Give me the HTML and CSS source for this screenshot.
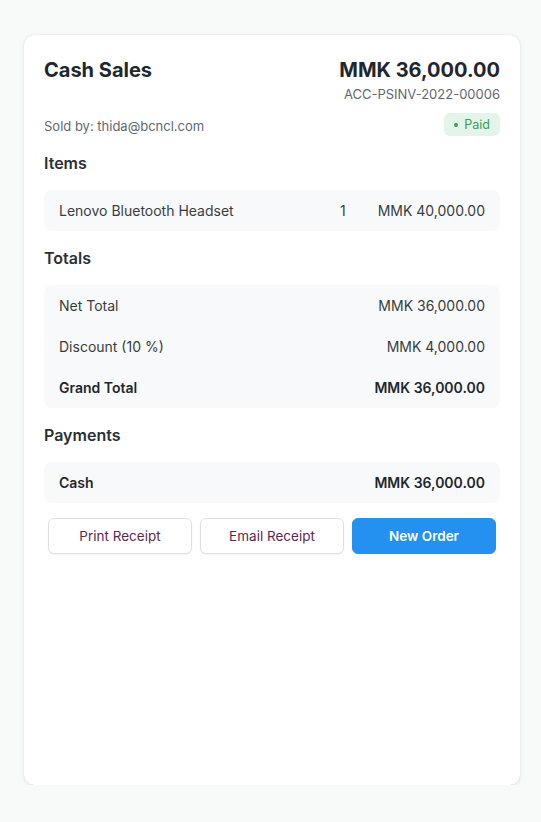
FILE: index.html
```html
<!DOCTYPE html>
<html>
<head>
<meta charset="utf-8">
<link rel="stylesheet" href="styles.css">
</head>
<body>
<div class="card">
  <div class="head-row">
    <div class="title">Cash Sales</div>
    <div class="amount">MMK 36,000.00</div>
  </div>
  <div class="inv-id">ACC-PSINV-2022-00006</div>
  <div class="sold-row">
    <div class="sold-by">Sold by: thida@bcncl.com</div>
    <div class="badge"><span class="dot"></span>Paid</div>
  </div>

  <div class="section-title">Items</div>
  <div class="box">
    <div class="row">
      <span class="grow">Lenovo Bluetooth Headset</span>
      <span class="qty">1</span>
      <span>MMK 40,000.00</span>
    </div>
  </div>

  <div class="section-title">Totals</div>
  <div class="box">
    <div class="row"><span class="grow">Net Total</span><span>MMK 36,000.00</span></div>
    <div class="row"><span class="grow">Discount (10 %)</span><span>MMK 4,000.00</span></div>
    <div class="row strong"><span class="grow">Grand Total</span><span>MMK 36,000.00</span></div>
  </div>

  <div class="section-title">Payments</div>
  <div class="box">
    <div class="row strong"><span class="grow">Cash</span><span>MMK 36,000.00</span></div>
  </div>

  <div class="actions">
    <button class="btn">Print Receipt</button>
    <button class="btn">Email Receipt</button>
    <button class="btn primary">New Order</button>
  </div>
</div>
</body>
</html>
```

FILE: styles.css
```css
html, body {
  margin: 0;
  padding: 0;
  background: #f8f9f9;
  font-family: Inter, "Noto Sans", sans-serif;
  color: #383d42;
}
.card {
  box-sizing: border-box;
  margin: 35px 21px 0 24px;
  height: 750px;
  padding: 21px 20px 20px;
  background: #ffffff;
  border-radius: 10px;
  box-shadow: 0 0 1px rgba(0,0,0,0.18), 0 1px 4px rgba(0,0,0,0.08);
}
.head-row {
  display: flex;
  justify-content: space-between;
  align-items: flex-start;
}
.title {
  font-size: 20px;
  line-height: 28px;
  font-weight: 700;
  color: #1f272e;
}
.amount {
  font-size: 20px;
  line-height: 28px;
  font-weight: 700;
  color: #1f272e;
}
.inv-id {
  text-align: right;
  font-size: 13px;
  line-height: 20px;
  color: #5f6770;
}
.sold-row {
  display: flex;
  justify-content: space-between;
  align-items: flex-end;
  margin-top: 9px;
  margin-bottom: 1px;
}
.sold-by {
  font-size: 13px;
  line-height: 20px;
  color: #5f6770;
}
.badge {
  display: flex;
  align-items: center;
  height: 23px;
  padding: 0 10px 0 10px;
  background: #e5f4ea;
  color: #30a056;
  font-size: 12.5px;
  border-radius: 6px;
}
.dot {
  width: 4px;
  height: 4px;
  border-radius: 50%;
  background: #30a056;
  margin-right: 6px;
}
.section-title {
  margin: 15px 0;
  font-size: 16px;
  line-height: 24px;
  font-weight: 600;
  color: #2b3036;
}
.box {
  background: #f8f9fa;
  border-radius: 8px;
}
.row {
  display: flex;
  align-items: center;
  padding: 12px 15px;
  font-size: 14px;
  line-height: 17px;
  color: #383d42;
}
.grow { flex: 1; }
.qty { margin-right: 32px; }
.strong {
  font-weight: 600;
  color: #1f272e;
}
.actions {
  display: grid;
  grid-template-columns: 1fr 1fr 1fr;
  gap: 8px;
  padding: 0 4px;
  margin-top: 15px;
}
.btn {
  height: 36px;
  border: 1px solid #dcdfe3;
  border-radius: 6px;
  background: #ffffff;
  font-family: Inter, "Noto Sans", sans-serif;
  font-size: 13.5px;
  color: #5e2750;
  box-shadow: 0 1px 2px rgba(0,0,0,0.05);
}
.btn.primary {
  background: #2490ef;
  border-color: #2490ef;
  color: #ffffff;
  font-weight: 600;
}
```
